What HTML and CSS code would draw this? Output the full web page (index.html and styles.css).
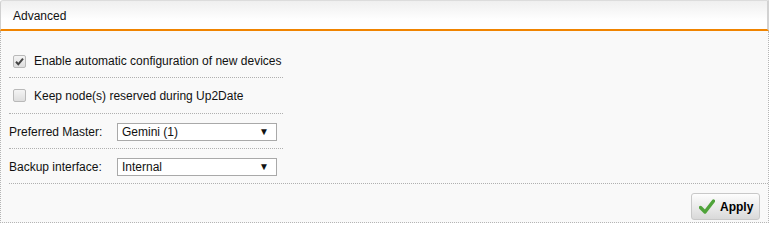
FILE: index.html
```html
<!DOCTYPE html>
<html>
<head>
<meta charset="utf-8">
<link rel="stylesheet" href="styles.css">
</head>
<body>
<div class="box">
  <div class="head"><span class="title">Advanced</span></div>
  <div class="body">
    <div class="row narrow first">
      <label class="check"><span class="cb checked"><svg viewBox="0 0 13 13" width="13" height="13"><path d="M3 6.8 L5.3 9.3 L10 3.6" fill="none" stroke="#444" stroke-width="2"/></svg></span>Enable automatic configuration of new devices</label>
    </div>
    <div class="row narrow second">
      <label class="check"><span class="cb"></span>Keep node(s) reserved during Up2Date</label>
    </div>
    <div class="row narrow field">
      <span class="lbl">Preferred Master:</span>
      <span class="select">Gemini (1)<span class="arrow">▼</span></span>
    </div>
    <div class="row wide field">
      <span class="lbl">Backup interface:</span>
      <span class="select">Internal<span class="arrow">▼</span></span>
    </div>
    <div class="actions">
      <button class="apply"><svg viewBox="0 0 16 16" width="16" height="17"><path d="M1.5 9 L6 13.5 L14.5 2.5" fill="none" stroke="#4fa33a" stroke-width="3.4" stroke-linecap="round" stroke-linejoin="round"/></svg>Apply</button>
    </div>
  </div>
</div>
</body>
</html>
```
FILE: styles.css
```css
html, body {
  margin: 0;
  padding: 0;
  background: #ffffff;
}
body {
  font-family: "Liberation Sans", Arial, sans-serif;
  font-size: 12px;
  color: #111;
}
.box {
  width: 769px;
}
.head {
  height: 28px;
  border-top: 1px solid #dcdcdc;
  border-left: 1px solid #d0d0d0;
  border-right: 2px solid #d2d2d2;
  border-top-left-radius: 3px;
  border-bottom: 2px solid #f08400;
  background: linear-gradient(#efefef, #ffffff 70%);
  display: flex;
  align-items: center;
  box-sizing: content-box;
  width: 766px;
}
.title {
  padding-left: 12px;
  padding-top: 2px;
}
.body {
  background: #f9f9f9;
  border-left: 1px dotted #b5b5b5;
  border-right: 1px dotted #b5b5b5;
  border-bottom: 1px dotted #b5b5b5;
  padding: 13px 0 0 8px;
  width: 759px;
  height: 178px;
}
.row {
  border-bottom: 1px dotted #b0b0b0;
  display: flex;
  align-items: center;
  white-space: nowrap;
  box-sizing: content-box;
}
.narrow {
  width: 274px;
}
.first {
  height: 32px;
  padding-top: 1px;
}
.second {
  height: 35px;
}
.field {
  height: 32px;
  padding-top: 2px;
}
.wide {
  width: 759px;
}
.check {
  display: flex;
  align-items: center;
}
.cb {
  flex: none;
  width: 11px;
  height: 11px;
  border: 1px solid #b9b9b9;
  border-radius: 2px;
  background: linear-gradient(#f4f4f4, #dedede);
  margin-left: 4px;
  margin-right: 8px;
  display: flex;
  overflow: hidden;
}
.cb svg {
  margin: -1px;
}
.lbl {
  flex: none;
  width: 108px;
}
.select {
  flex: none;
  width: 150px;
  height: 16px;
  border: 1px solid #a9a9a9;
  background: #fff;
  padding: 0 4px;
  display: flex;
  align-items: center;
  justify-content: space-between;
  line-height: 16px;
}
.arrow {
  font-size: 10px;
  margin-right: 3px;
}
.actions {
  display: flex;
  justify-content: flex-end;
  padding-top: 9px;
  padding-right: 8px;
}
.apply {
  font-family: "Liberation Sans", Arial, sans-serif;
  font-size: 12px;
  font-weight: bold;
  color: #000;
  height: 27px;
  width: 69px;
  border: 1px solid #c8c8c8;
  border-radius: 3px;
  background: linear-gradient(#fdfdfd, #d9d9d9);
  display: flex;
  align-items: center;
  padding: 0 0 0 7px;
  gap: 5px;
  cursor: pointer;
}
```
